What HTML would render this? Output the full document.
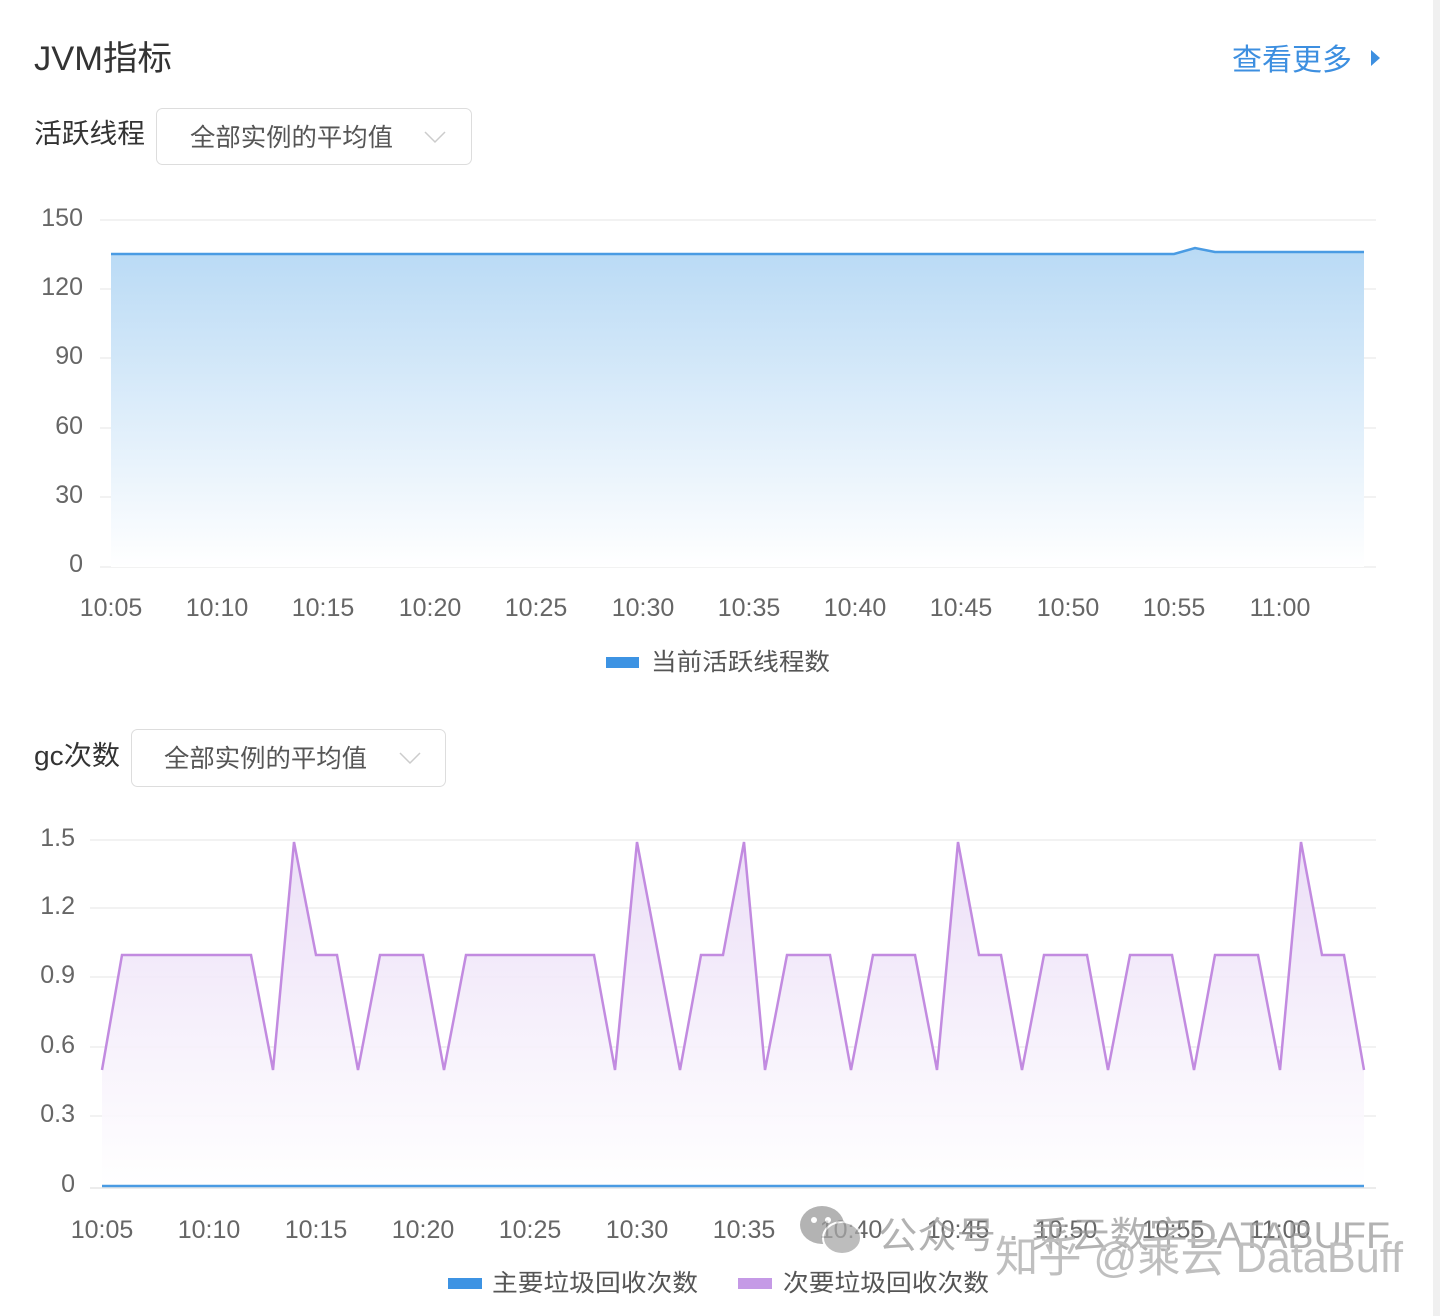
<!DOCTYPE html>
<html><head><meta charset="utf-8"><style>
html,body{margin:0;padding:0;background:#fff;}
body{width:1440px;height:1316px;overflow:hidden;position:relative;}
svg{position:absolute;left:0;top:0;}
text{font-family:"Liberation Sans","Noto Sans CJK SC",sans-serif;}
</style></head><body>
<svg width="1440" height="1316" viewBox="0 0 1440 1316" xmlns="http://www.w3.org/2000/svg">
<defs>
<linearGradient id="gb" x1="0" y1="0" x2="0" y2="1">
<stop offset="0" stop-color="#b9daf5"/><stop offset="1" stop-color="#ffffff"/></linearGradient>
<linearGradient id="gp" x1="0" y1="0" x2="0" y2="1">
<stop offset="0" stop-color="#eadcf6"/><stop offset="1" stop-color="#ffffff"/></linearGradient>
</defs>
<rect x="1433" y="0" width="7" height="1316" fill="#f0f0f0"/>
<text x="34" y="70" font-size="34" fill="#333" textLength="138" lengthAdjust="spacingAndGlyphs">JVM指标</text>
<text x="1232" y="70" font-size="30" fill="#3d8fe0">查看更多</text>
<path d="M1371 50 L1380 58 L1371 66Z" fill="#3d8fe0"/>
<text x="34" y="143" font-size="27" fill="#333" textLength="111" lengthAdjust="spacingAndGlyphs">活跃线程</text>
<rect x="156.5" y="108.5" width="315" height="56" rx="6" fill="#fff" stroke="#ddd"/>
<text x="190" y="146" font-size="25" fill="#555" textLength="203" lengthAdjust="spacingAndGlyphs">全部实例的平均值</text>
<path d="M425 132 L435 142 L445 132" fill="none" stroke="#ccc" stroke-width="1.5"/>
<g stroke="#eee" stroke-width="1.5">
<line x1="100" y1="220" x2="1376" y2="220"/><line x1="100" y1="289" x2="1376" y2="289"/>
<line x1="100" y1="358" x2="1376" y2="358"/><line x1="100" y1="428" x2="1376" y2="428"/>
<line x1="100" y1="497" x2="1376" y2="497"/><line x1="100" y1="567" x2="1376" y2="567"/>
</g>
<g font-size="25" fill="#666" text-anchor="end">
<text x="83" y="226">150</text><text x="83" y="295">120</text><text x="83" y="364">90</text>
<text x="83" y="434">60</text><text x="83" y="503">30</text><text x="83" y="572">0</text>
</g>
<path d="M111 254 L1174 254 L1195 248 L1215 252 L1364 252 L1364 567 L111 567Z" fill="url(#gb)"/>
<path d="M111 254 L1174 254 L1195 248 L1215 252 L1364 252" fill="none" stroke="#4a9be3" stroke-width="2.5"/>
<g font-size="25" fill="#666" text-anchor="middle">
<text x="111" y="616">10:05</text><text x="217" y="616">10:10</text><text x="323" y="616">10:15</text>
<text x="430" y="616">10:20</text><text x="536" y="616">10:25</text><text x="643" y="616">10:30</text>
<text x="749" y="616">10:35</text><text x="855" y="616">10:40</text><text x="961" y="616">10:45</text>
<text x="1068" y="616">10:50</text><text x="1174" y="616">10:55</text><text x="1280" y="616">11:00</text>
</g>
<rect x="606" y="657" width="33" height="11" fill="#3d93e3"/>
<text x="651" y="670" font-size="24" fill="#555" textLength="179" lengthAdjust="spacingAndGlyphs">当前活跃线程数</text>

<text x="34" y="765" font-size="27" fill="#333" textLength="86" lengthAdjust="spacingAndGlyphs">gc次数</text>
<rect x="131.5" y="729.5" width="314" height="57" rx="6" fill="#fff" stroke="#ddd"/>
<text x="164" y="767" font-size="25" fill="#555" textLength="203" lengthAdjust="spacingAndGlyphs">全部实例的平均值</text>
<path d="M400 753 L410 763 L420 753" fill="none" stroke="#ccc" stroke-width="1.5"/>
<g stroke="#eee" stroke-width="1.5">
<line x1="90" y1="840" x2="1376" y2="840"/><line x1="90" y1="908" x2="1376" y2="908"/>
<line x1="90" y1="977" x2="1376" y2="977"/><line x1="90" y1="1047" x2="1376" y2="1047"/>
<line x1="90" y1="1116" x2="1376" y2="1116"/>
</g>
<g font-size="25" fill="#666" text-anchor="end">
<text x="75" y="846">1.5</text><text x="75" y="914">1.2</text><text x="75" y="983">0.9</text>
<text x="75" y="1053">0.6</text><text x="75" y="1122">0.3</text><text x="75" y="1192">0</text>
</g>
<path d="M102 1070 L122 955 L251 955 L273 1070 L294 842 L316 955 L337 955 L358 1070 L380 955 L423 955 L444 1070 L466 955 L594 955 L615 1070 L637 842 L680 1070 L701 955 L723 955 L744 842 L765 1070 L787 955 L830 955 L851 1070 L873 955 L915 955 L937 1070 L958 842 L979 955 L1001 955 L1022 1070 L1044 955 L1087 955 L1108 1070 L1130 955 L1172 955 L1194 1070 L1215 955 L1258 955 L1280 1070 L1301 842 L1322 955 L1344 955 L1364 1070 L1364 1186 L102 1186Z" fill="url(#gp)" opacity="0.9"/>
<path d="M102 1070 L122 955 L251 955 L273 1070 L294 842 L316 955 L337 955 L358 1070 L380 955 L423 955 L444 1070 L466 955 L594 955 L615 1070 L637 842 L680 1070 L701 955 L723 955 L744 842 L765 1070 L787 955 L830 955 L851 1070 L873 955 L915 955 L937 1070 L958 842 L979 955 L1001 955 L1022 1070 L1044 955 L1087 955 L1108 1070 L1130 955 L1172 955 L1194 1070 L1215 955 L1258 955 L1280 1070 L1301 842 L1322 955 L1344 955 L1364 1070" fill="none" stroke="#c28be0" stroke-width="2.5"/>
<line x1="90" y1="1188" x2="1376" y2="1188" stroke="#e6e6e6" stroke-width="1.5"/>
<line x1="102" y1="1186" x2="1364" y2="1186" stroke="#4a9be3" stroke-width="2.5"/>
<g font-size="25" fill="#666" text-anchor="middle">
<text x="102" y="1238">10:05</text><text x="209" y="1238">10:10</text><text x="316" y="1238">10:15</text>
<text x="423" y="1238">10:20</text><text x="530" y="1238">10:25</text><text x="637" y="1238">10:30</text>
<text x="744" y="1238">10:35</text><text x="851" y="1238">10:40</text><text x="958" y="1238">10:45</text>
<text x="1066" y="1238">10:50</text><text x="1173" y="1238">10:55</text><text x="1280" y="1238">11:00</text>
</g>
<rect x="448" y="1278" width="34" height="11" fill="#3d93e3"/>
<text x="492" y="1291" font-size="24" fill="#555" textLength="206" lengthAdjust="spacingAndGlyphs">主要垃圾回收次数</text>
<rect x="738" y="1278" width="34" height="11" fill="#c59ae6"/>
<text x="783" y="1291" font-size="24" fill="#555" textLength="206" lengthAdjust="spacingAndGlyphs">次要垃圾回收次数</text>
<g opacity="0.75">
<ellipse cx="822" cy="1225" rx="22" ry="19" fill="#9a9a9a"/>
<ellipse cx="842" cy="1238" rx="19" ry="16" fill="#a8a8a8" stroke="#fff" stroke-width="2"/>
<circle cx="814" cy="1220" r="3" fill="#fff"/><circle cx="828" cy="1220" r="3" fill="#fff"/>
<text x="878" y="1248" font-size="37" fill="#999" textLength="512" lengthAdjust="spacingAndGlyphs">公众号 · 乘云数字DATABUFF</text>
<text x="995" y="1272" font-size="43" fill="#aaa" textLength="408" lengthAdjust="spacingAndGlyphs">知乎 @乘云 DataBuff</text>
</g>
</svg>
</body></html>
